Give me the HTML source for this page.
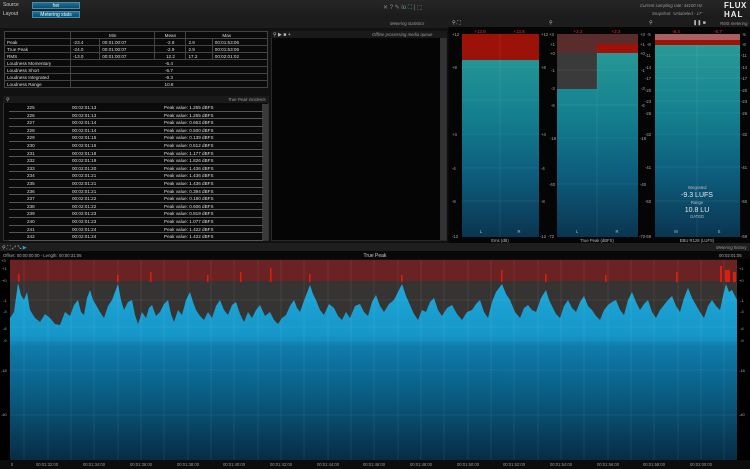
<!DOCTYPE html>
<html><head><meta charset="utf-8"><style>
*{margin:0;padding:0;box-sizing:border-box}
body{width:750px;height:469px;background:#0b0b0b;font-family:"Liberation Sans",sans-serif;color:#ccc;position:relative;overflow:hidden;font-size:5px}
.a{position:absolute}
.btn{position:absolute;background:linear-gradient(#1f6f93,#0e4d6c);border:1px solid #3a8fb5;color:#dff;text-align:center;font-size:5px;line-height:6px}
table{border-collapse:collapse;font-size:4.6px;color:#ddd}
td{border:1px solid #444;height:7px;padding:0 2px;white-space:nowrap}
.row{position:absolute;left:6px;width:254px;height:7.6px;border-bottom:1px solid #555;font-size:4.6px;color:#ddd;line-height:7px}
.row span{position:absolute}
</style></head><body>
<div class="a" style="left:0;top:0;width:750px;height:19px;background:linear-gradient(#262626,#1a1a1a)"></div>
<div class="a" style="left:3px;top:2px;font-size:5px">Source</div>
<div class="a" style="left:3px;top:11px;font-size:5px">Layout</div>
<div class="btn" style="left:32px;top:2px;width:48px;height:7px">hei</div>
<div class="btn" style="left:32px;top:11px;width:48px;height:7px">Metering stats</div>
<div class="a" style="left:383px;top:4px;font-size:6px;color:#888">✕ ? ✎ lo <span style="color:#3ab">⛶</span> | ⬚</div>
<div class="a" style="left:640px;top:3px;font-size:4.3px;color:#999;font-style:italic">Current sampling rate: 44100 Hz</div>
<div class="a" style="left:652px;top:11px;font-size:4.3px;color:#999;font-style:italic">Snapshot: 'Unlabeled - 17'</div>
<div class="a" style="left:724px;top:1px;font-size:8px;font-weight:bold;color:#eee;letter-spacing:.5px">FLUX</div>
<div class="a" style="left:724px;top:10px;font-size:8px;font-weight:bold;color:#eee;letter-spacing:1px">HAL</div>
<div class="a" style="left:0;top:19px;width:750px;height:8px;background:#1e1e1e"></div>
<div class="a" style="left:2px;top:20px;font-size:5px;color:#bbb">⚲ ⛶ ■ ▣</div>
<div class="a" style="left:0;top:27px;width:448px;height:216px;background:#111"></div>
<div class="a" style="left:0;top:18px;width:448px;height:10px;background:#1c1c1c"></div>
<div class="a" style="left:390px;top:21px;font-size:4.3px;color:#999;font-style:italic">Metering statistics</div>
<table class="a" style="left:4px;top:31px;width:264px;background:#0a0a0a">
<tr><td style="width:66px"></td><td colspan=2 style="text-align:center">Min</td><td style="text-align:center">Mean</td><td colspan=2 style="text-align:center">Max</td></tr>
<tr><td>Peak</td><td>-23.4</td><td>00:01:00:07</td><td style="text-align:center">-2.9</td><td>2.9</td><td>00:01:53:06</td></tr>
<tr><td>True Peak</td><td>-24.0</td><td>00:01:00:07</td><td style="text-align:center">-2.9</td><td>2.9</td><td>00:01:53:06</td></tr>
<tr><td>RMS</td><td>-13.0</td><td>00:01:00:07</td><td style="text-align:center">12.2</td><td>17.2</td><td>00:02:01:02</td></tr>
<tr><td>Loudness Momentary</td><td colspan=5 style="text-align:center">-6.4</td></tr>
<tr><td>Loudness Short</td><td colspan=5 style="text-align:center">-6.7</td></tr>
<tr><td>Loudness Integrated</td><td colspan=5 style="text-align:center">-9.3</td></tr>
<tr><td>Loudness Range</td><td colspan=5 style="text-align:center">10.8</td></tr>
</table>
<div class="a" style="left:3px;top:96px;width:266px;height:145px;background:#0a0a0a;border:1px solid #333"></div>
<div class="a" style="left:3px;top:96px;width:266px;height:7px;background:#1a1a1a"></div>
<div class="a" style="left:6px;top:97px;font-size:5px;color:#bbb">⚲</div>
<div class="a" style="left:228px;top:97px;font-size:4.3px;color:#999;font-style:italic">True Peak incidents</div>
<div class="a" style="left:262px;top:104px;width:6px;height:136px;background:#3a3a3a"></div>
<div class="a" style="left:271px;top:31px;width:176px;height:210px;background:#050505;border:1px solid #2a2a2a"></div>
<div class="a" style="left:271px;top:31px;width:176px;height:7px;background:#1a1a1a"></div>
<div class="a" style="left:273px;top:32px;font-size:5px;color:#bbb">⚲ ▶ ■ +</div>
<div class="a" style="left:372px;top:32px;font-size:4.3px;color:#999;font-style:italic">Offline processing media queue</div>
<div class="a" style="left:440px;top:38px;width:6px;height:202px;background:#333"></div>
<div class="a" style="left:449px;top:18px;width:301px;height:227px;background:#050505"></div>
<div class="a" style="left:449px;top:18px;width:301px;height:9px;background:#1c1c1c"></div>
<div class="a" style="left:452px;top:20px;font-size:5px;color:#bbb">⚲ ⛶</div>
<div class="a" style="left:549px;top:20px;font-size:5px;color:#bbb">⚲</div>
<div class="a" style="left:649px;top:20px;font-size:5px;color:#bbb">⚲</div>
<div class="a" style="left:693px;top:20px;font-size:5px;color:#bbb">❚❚ ■</div>
<div class="a" style="left:720px;top:21px;font-size:4.3px;color:#999;font-style:italic">RMS metering</div>
<svg class="a" style="left:0;top:0" width="750" height="469">
<defs>
<linearGradient id="tl" x1="0" y1="0" x2="0" y2="1"><stop offset="0" stop-color="#2c9e98"/><stop offset=".4" stop-color="#14808f"/><stop offset=".7" stop-color="#0d5c7c"/><stop offset="1" stop-color="#0a3550"/></linearGradient>
<linearGradient id="wv" x1="0" y1="0" x2="0" y2="1"><stop offset="0" stop-color="#1ea8d8"/><stop offset=".3" stop-color="#1596c8"/><stop offset=".36" stop-color="#0e7cac"/><stop offset=".65" stop-color="#0a5a80"/><stop offset="1" stop-color="#072c44"/></linearGradient>
</defs>
<g font-family="Liberation Sans" font-size="4.5" fill="#e03030" text-anchor="middle"><text x="480" y="33">+13.9</text><text x="519" y="33">+13.8</text><text x="578" y="33">+2.2</text><text x="616" y="33">+2.3</text><text x="676" y="33">-6.4</text><text x="718" y="33">-6.7</text></g>
<rect x="462" y="34" width="77" height="203" fill="url(#tl)"/>
<rect x="462" y="34" width="77" height="26" fill="#9a1208"/>
<rect x="557" y="34" width="81" height="203" fill="url(#tl)"/>
<rect x="557" y="34" width="40" height="55" fill="#3a3a3a"/>
<rect x="557" y="34" width="40" height="19" fill="#5a2c2c"/>
<rect x="597" y="34" width="41" height="10" fill="#5a2c2c"/>
<rect x="597" y="44" width="41" height="9" fill="#a01208"/>
<rect x="655" y="34" width="85" height="203" fill="url(#tl)"/>
<rect x="655" y="34" width="85" height="6" fill="#a86060"/>
<rect x="655" y="40" width="85" height="5" fill="#a01208"/>
<g stroke="#ffffff" stroke-opacity=".12" stroke-width=".6">
<line x1="500" y1="34" x2="500" y2="237"/><line x1="597" y1="53" x2="597" y2="237"/><line x1="697" y1="45" x2="697" y2="237"/>
<line x1="462" y1="67" x2="539" y2="67"/><line x1="462" y1="100" x2="539" y2="100"/><line x1="462" y1="134" x2="539" y2="134"/><line x1="462" y1="168" x2="539" y2="168"/><line x1="462" y1="201" x2="539" y2="201"/>
<line x1="557" y1="70" x2="638" y2="70"/><line x1="557" y1="105" x2="638" y2="105"/><line x1="557" y1="138" x2="638" y2="138"/><line x1="557" y1="184" x2="638" y2="184"/>
<line x1="655" y1="55" x2="740" y2="55"/><line x1="655" y1="67" x2="740" y2="67"/><line x1="655" y1="78" x2="740" y2="78"/><line x1="655" y1="90" x2="740" y2="90"/><line x1="655" y1="101" x2="740" y2="101"/><line x1="655" y1="113" x2="740" y2="113"/><line x1="655" y1="134" x2="740" y2="134"/><line x1="655" y1="167" x2="740" y2="167"/><line x1="655" y1="201" x2="740" y2="201"/>
</g>
<g font-family="Liberation Sans" font-size="4.2" fill="#aaa">
<text x="452" y="36">+12</text><text x="452" y="69">+8</text><text x="452" y="136">+4</text><text x="452" y="170">-4</text><text x="452" y="203">-8</text><text x="452" y="238">-12</text>
<text x="541" y="36">+12</text><text x="541" y="69">+8</text><text x="541" y="136">+4</text><text x="541" y="170">-4</text><text x="541" y="203">-8</text><text x="540" y="238">-12</text>
<text x="549" y="36">+3</text><text x="550" y="46">+1</text><text x="550" y="55">+0</text><text x="551" y="72">-1</text><text x="551" y="90">-3</text><text x="551" y="107">-6</text><text x="550" y="140">-18</text><text x="549" y="186">-40</text><text x="548" y="238">-72</text>
<text x="640" y="36">+3</text><text x="640" y="46">+1</text><text x="640" y="55">+0</text><text x="641" y="72">-1</text><text x="641" y="90">-3</text><text x="641" y="107">-6</text><text x="640" y="140">-18</text><text x="640" y="186">-40</text><text x="639" y="238">-72</text>
<text x="647" y="36">-5</text><text x="647" y="46">-8</text><text x="645" y="57">-11</text><text x="645" y="69">-14</text><text x="645" y="80">-17</text><text x="645" y="92">-20</text><text x="645" y="103">-23</text><text x="645" y="115">-26</text><text x="645" y="136">-32</text><text x="645" y="169">-41</text><text x="645" y="203">-50</text><text x="645" y="238">-59</text>
<text x="742" y="36">-5</text><text x="742" y="46">-8</text><text x="741" y="57">-11</text><text x="741" y="69">-14</text><text x="741" y="80">-17</text><text x="741" y="92">-20</text><text x="741" y="103">-23</text><text x="741" y="115">-26</text><text x="741" y="136">-32</text><text x="741" y="169">-41</text><text x="741" y="203">-50</text><text x="741" y="238">-59</text>
</g>
<g font-family="Liberation Sans" font-size="4.2" fill="#bbb" text-anchor="middle">
<text x="481" y="233">L</text><text x="519" y="233">R</text><text x="577" y="233">L</text><text x="617" y="233">R</text><text x="676" y="233">M</text><text x="719" y="233">S</text>
<text x="500" y="242">Ems (dB)</text><text x="597" y="242">True Peak (dBFS)</text><text x="697" y="242">EBU R128 (LUFS)</text>
</g>
<g font-family="Liberation Sans" fill="#e8e8e8" text-anchor="middle">
<text x="697" y="189" font-size="4.2" fill="#bbb">Integrated</text>
<text x="697" y="197" font-size="7">-9.3 LUFS</text>
<text x="697" y="204" font-size="4.2" fill="#bbb">Range</text>
<text x="697" y="212" font-size="7">10.8 LU</text>
<text x="697" y="218" font-size="4.2" fill="#bbb">GATED</text>
</g>
<rect x="0" y="245" width="750" height="224" fill="#111"/>
<rect x="0" y="243" width="750" height="8" fill="#1e1e1e"/>
<text x="2" y="249" font-family="Liberation Sans" font-size="5" fill="#bbb">⚲ ⛶ ⤢ ⤡ <tspan fill="#2ab">▶</tspan></text>
<text x="716" y="249" font-family="Liberation Sans" font-size="4.3" fill="#999" font-style="italic">Metering history</text>
<rect x="0" y="251" width="750" height="8" fill="#080808"/>
<text x="3" y="257" font-family="Liberation Sans" font-size="4.3" fill="#aaa">Offset: 00:00:00:00 - Length: 00:00:31:05</text>
<text x="375" y="257" font-family="Liberation Sans" font-size="5" fill="#ccc" text-anchor="middle">True Peak</text>
<text x="719" y="257" font-family="Liberation Sans" font-size="4.3" fill="#aaa">00:02:01:05</text>
<rect x="0" y="259" width="10" height="202" fill="#000"/>
<rect x="737" y="259" width="13" height="202" fill="#000"/>
<rect x="10" y="260" width="727" height="200" fill="#363333"/>
<rect x="10" y="260" width="727" height="21" fill="#6b2222"/>
<polygon fill="url(#wv)" points="10,460 10,318 14,312 18,283 21,295 24,300 27,292 30,310 35,318 40,322 45,314 50,318 55,324 60,325 65,312 70,316 74,305 78,300 81,312 84,315 87,298 90,290 93,300 96,305 100,312 104,318 108,306 112,300 115,292 118,284 121,300 124,310 128,302 132,300 135,315 138,324 142,312 146,318 149,308 152,305 156,316 160,312 164,304 168,300 171,314 174,322 178,310 182,315 186,300 190,292 193,302 196,310 200,316 204,320 208,312 212,318 216,306 220,300 224,310 228,315 232,305 236,302 240,314 244,322 248,312 252,318 256,310 260,305 265,316 270,312 274,320 278,324 282,318 286,315 290,306 294,300 297,308 300,312 305,298 310,285 313,294 316,300 320,310 324,315 329,304 334,308 338,316 342,320 346,312 350,318 355,306 360,304 364,312 368,316 372,302 376,295 380,306 384,312 389,304 394,300 398,292 402,284 406,296 410,305 414,314 418,320 422,310 426,312 430,302 434,298 438,310 442,316 447,308 452,305 457,314 462,320 467,312 472,310 476,304 480,300 484,312 488,318 492,302 496,292 499,288 502,284 506,294 510,300 515,312 520,318 524,308 528,305 532,310 536,312 541,298 546,290 549,300 552,306 556,314 560,318 564,306 568,300 572,308 576,312 580,302 584,296 588,306 592,310 596,316 600,320 604,310 608,305 612,302 616,300 620,310 624,315 628,300 632,292 636,302 640,310 644,304 648,300 652,312 656,318 660,310 664,305 668,300 672,296 676,306 680,312 684,298 688,288 692,298 696,305 700,312 704,318 708,306 712,300 716,306 720,310 723,296 726,284 729,292 732,290 735,296 737,300 737,460"/>
<g fill="#d82010"><rect x="18" y="274" width="1.5" height="8"/><rect x="117" y="275" width="1.5" height="7"/><rect x="150" y="272" width="1.5" height="10"/><rect x="207" y="275" width="1.5" height="7"/><rect x="240" y="272" width="1.5" height="10"/><rect x="270" y="268" width="1.5" height="14"/><rect x="309" y="274" width="1.5" height="8"/><rect x="401" y="275" width="1.5" height="7"/><rect x="501" y="270" width="1.5" height="12"/><rect x="545" y="274" width="1.5" height="8"/><rect x="605" y="275" width="1.5" height="7"/><rect x="676" y="272" width="1.5" height="10"/><rect x="720" y="266" width="2" height="16"/><rect x="725" y="270" width="5" height="12"/><rect x="733" y="272" width="3" height="10"/></g>
<g stroke="#ffffff" stroke-opacity=".12" stroke-width=".6">
<line x1="24" y1="260" x2="24" y2="460"/><line x1="48" y1="260" x2="48" y2="460"/><line x1="71" y1="260" x2="71" y2="460"/><line x1="94" y1="260" x2="94" y2="460"/><line x1="118" y1="260" x2="118" y2="460"/><line x1="141" y1="260" x2="141" y2="460"/><line x1="164" y1="260" x2="164" y2="460"/><line x1="188" y1="260" x2="188" y2="460"/><line x1="211" y1="260" x2="211" y2="460"/><line x1="234" y1="260" x2="234" y2="460"/><line x1="258" y1="260" x2="258" y2="460"/><line x1="281" y1="260" x2="281" y2="460"/><line x1="304" y1="260" x2="304" y2="460"/><line x1="328" y1="260" x2="328" y2="460"/><line x1="351" y1="260" x2="351" y2="460"/><line x1="374" y1="260" x2="374" y2="460"/><line x1="398" y1="260" x2="398" y2="460"/><line x1="421" y1="260" x2="421" y2="460"/><line x1="444" y1="260" x2="444" y2="460"/><line x1="468" y1="260" x2="468" y2="460"/><line x1="491" y1="260" x2="491" y2="460"/><line x1="514" y1="260" x2="514" y2="460"/><line x1="538" y1="260" x2="538" y2="460"/><line x1="561" y1="260" x2="561" y2="460"/><line x1="584" y1="260" x2="584" y2="460"/><line x1="608" y1="260" x2="608" y2="460"/><line x1="631" y1="260" x2="631" y2="460"/><line x1="654" y1="260" x2="654" y2="460"/><line x1="678" y1="260" x2="678" y2="460"/><line x1="701" y1="260" x2="701" y2="460"/><line x1="724" y1="260" x2="724" y2="460"/>
<line x1="10" y1="300" x2="737" y2="300"/><line x1="10" y1="327" x2="737" y2="327"/><line x1="10" y1="340" x2="737" y2="340"/><line x1="10" y1="370" x2="737" y2="370"/><line x1="10" y1="415" x2="737" y2="415"/>
</g>
<g font-family="Liberation Sans" font-size="4" fill="#aaa">
<text x="1" y="262">+3</text><text x="2" y="270">+1</text><text x="2" y="282">+0</text><text x="3" y="302">-1</text><text x="3" y="313">-3</text><text x="3" y="330">-6</text><text x="3" y="342">-9</text><text x="1" y="372">-18</text><text x="1" y="416">-40</text>
<text x="739" y="270">+1</text><text x="739" y="282">+0</text><text x="740" y="302">-1</text><text x="740" y="313">-3</text><text x="740" y="330">-6</text><text x="740" y="342">-9</text><text x="739" y="372">-18</text><text x="739" y="416">-40</text>
</g>
<rect x="0" y="460" width="750" height="9" fill="#0c0c0c"/>
<g font-family="Liberation Sans" font-size="4.2" fill="#999" text-anchor="middle">
<text x="12" y="466">0</text><text x="47" y="466">00:01:32:00</text><text x="94" y="466">00:01:34:00</text><text x="141" y="466">00:01:36:00</text><text x="188" y="466">00:01:38:00</text><text x="234" y="466">00:01:40:00</text><text x="281" y="466">00:01:42:00</text><text x="328" y="466">00:01:44:00</text><text x="374" y="466">00:01:46:00</text><text x="421" y="466">00:01:48:00</text><text x="468" y="466">00:01:50:00</text><text x="514" y="466">00:01:52:00</text><text x="561" y="466">00:01:54:00</text><text x="608" y="466">00:01:56:00</text><text x="654" y="466">00:01:58:00</text><text x="701" y="466">00:02:00:00</text>
</g>
</svg>
<div class="a" style="left:3px;top:104px;width:258px">
<div class="row" style="top:0"><span style="left:18px">225</span><span style="left:63px">00:02:01:13</span><span style="left:155px">Peak value: 1.255 dBFS</span></div>
<div class="row" style="top:7.6px"><span style="left:18px">226</span><span style="left:63px">00:02:01:13</span><span style="left:155px">Peak value: 1.255 dBFS</span></div>
<div class="row" style="top:15.2px"><span style="left:18px">227</span><span style="left:63px">00:02:01:14</span><span style="left:155px">Peak value: 0.663 dBFS</span></div>
<div class="row" style="top:22.8px"><span style="left:18px">228</span><span style="left:63px">00:02:01:14</span><span style="left:155px">Peak value: 0.500 dBFS</span></div>
<div class="row" style="top:30.4px"><span style="left:18px">229</span><span style="left:63px">00:02:01:15</span><span style="left:155px">Peak value: 0.139 dBFS</span></div>
<div class="row" style="top:38px"><span style="left:18px">230</span><span style="left:63px">00:02:01:16</span><span style="left:155px">Peak value: 0.512 dBFS</span></div>
<div class="row" style="top:45.6px"><span style="left:18px">231</span><span style="left:63px">00:02:01:18</span><span style="left:155px">Peak value: 1.177 dBFS</span></div>
<div class="row" style="top:53.2px"><span style="left:18px">232</span><span style="left:63px">00:02:01:19</span><span style="left:155px">Peak value: 1.826 dBFS</span></div>
<div class="row" style="top:60.8px"><span style="left:18px">233</span><span style="left:63px">00:02:01:20</span><span style="left:155px">Peak value: 1.436 dBFS</span></div>
<div class="row" style="top:68.4px"><span style="left:18px">234</span><span style="left:63px">00:02:01:21</span><span style="left:155px">Peak value: 1.436 dBFS</span></div>
<div class="row" style="top:76px"><span style="left:18px">235</span><span style="left:63px">00:02:01:21</span><span style="left:155px">Peak value: 1.436 dBFS</span></div>
<div class="row" style="top:83.6px"><span style="left:18px">236</span><span style="left:63px">00:02:01:21</span><span style="left:155px">Peak value: 0.394 dBFS</span></div>
<div class="row" style="top:91.2px"><span style="left:18px">237</span><span style="left:63px">00:02:01:22</span><span style="left:155px">Peak value: 0.180 dBFS</span></div>
<div class="row" style="top:98.8px"><span style="left:18px">238</span><span style="left:63px">00:02:01:22</span><span style="left:155px">Peak value: 0.606 dBFS</span></div>
<div class="row" style="top:106.4px"><span style="left:18px">239</span><span style="left:63px">00:02:01:23</span><span style="left:155px">Peak value: 0.819 dBFS</span></div>
<div class="row" style="top:114px"><span style="left:18px">240</span><span style="left:63px">00:02:01:23</span><span style="left:155px">Peak value: 1.077 dBFS</span></div>
<div class="row" style="top:121.6px"><span style="left:18px">241</span><span style="left:63px">00:02:01:24</span><span style="left:155px">Peak value: 1.422 dBFS</span></div>
<div class="row" style="top:129.2px"><span style="left:18px">242</span><span style="left:63px">00:02:01:24</span><span style="left:155px">Peak value: 1.422 dBFS</span></div>
</div>
</body></html>
